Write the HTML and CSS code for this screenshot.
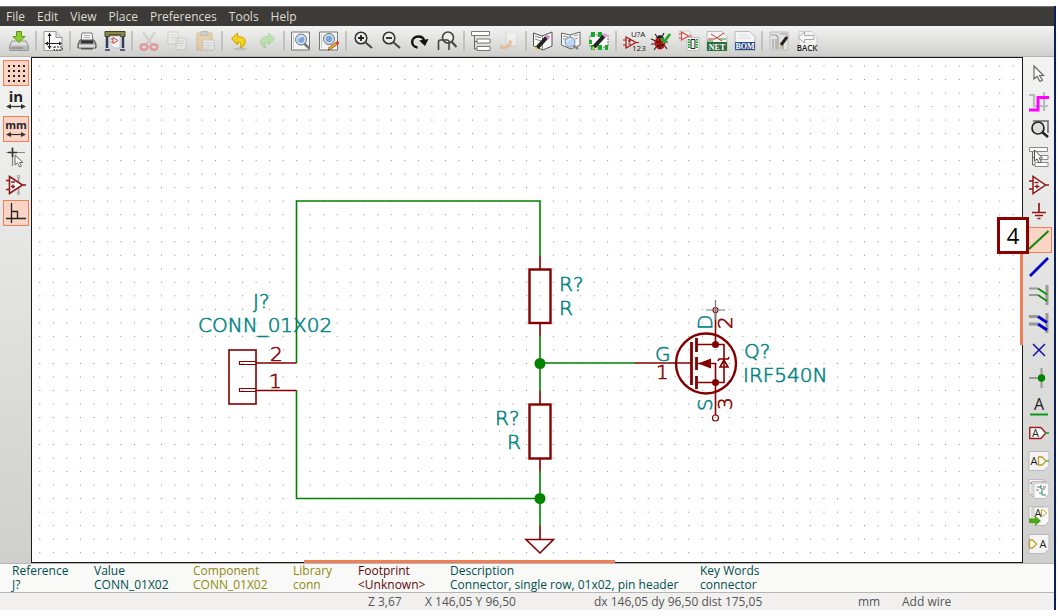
FILE: index.html
```html
<!DOCTYPE html>
<html lang="en">

<head>
    <meta charset="utf-8">
    <title>Eeschema</title>
    <link rel="stylesheet" href="styles.css">
</head>

<body>
    <div class="window">
        <nav class="menubar">
            <button>File</button>
            <button>Edit</button>
            <button>View</button>
            <button>Place</button>
            <button>Preferences</button>
            <button>Tools</button>
            <button>Help</button>
        </nav>

        <div class="toolbar">
            <button title="Save"><svg viewBox="0 0 20 20"><path d="M3 10h14l2.500 5v3.500q0 1-1 1h-17q-1 0-1-1V15z" fill="#b9b9b9" stroke="#888" stroke-width=".8"/><path d="M3.500 10.500h13l2 4H1.500z" fill="#ddd"/><path d="M2 17h12" stroke="#777"/><path d="M7.500 0.500h5v5h3.500l-6 6-6-6h3.500z" fill="#8fca35" stroke="#5a9a12"/></svg></button>
            <span class="sep"></span>
            <button title="Page settings"><svg viewBox="0 0 20 20"><path d="M1 .5h12l6 6v13H1z" fill="#fafafa" stroke="#999"/><path d="M13 .5v6h6" fill="#ddd" stroke="#999"/><path d="M6.500 2v16M2 12.500h16" stroke="#222" fill="none"/><path d="M4.500 5l2-3 2 3zM4.500 15l2 3 2-3zM5 10.500l-3 2 3 2zM16 10.500l3 2-3 2z" fill="#222"/><path d="M11 16h8v3h-8z" fill="#fff" stroke="#222" stroke-dasharray="2 1"/></svg></button>
            <span class="sep"></span>
            <button title="Print"><svg viewBox="0 0 20 20"><path d="M5 2h10l1 8H4z" fill="#fff" stroke="#777"/><path d="M7 4.500h6M6.500 6.500h7" stroke="#aaa"/><path d="M3 9h14l2 4v4H1v-4z" fill="#999" stroke="#555"/><path d="M4 9.500h12v3H4z" fill="#333"/><path d="M2 13.500h16v3H2z" fill="#ddd"/><path d="M4 17h12v1.500H4z" fill="#555"/></svg></button>
            <button title="Plot"><svg viewBox="0 0 20 20"><path d="M2 5v12M18 5v12" stroke="#2c3c60" stroke-width="2.500"/><path d="M0 19h5M15 19h5" stroke="#2c3c60" stroke-width="1.500"/><path d="M0 .5h20v5H0z" fill="#8a8748" stroke="#44431e"/><path d="M4 3.500h12v1H4z" fill="#222"/><path d="M5 5h10v12H9l-4-4z" fill="#f4f4f4" stroke="#aaa" stroke-width=".6"/><path d="M8 6.500v6l5-3z" fill="none" stroke="#c44"/><path d="M6 8h2M6 11h2" stroke="#c44"/></svg></button>
            <span class="sep"></span>
            <button title="Cut" disabled><svg viewBox="0 0 20 20"><path d="M4 1l9 13M16 1L7 14" stroke="#aaa" stroke-width="2.200" fill="none"/><ellipse cx="5" cy="16" rx="3.500" ry="2.800" fill="none" stroke="#e22" stroke-width="2.400"/><ellipse cx="15" cy="16" rx="3.500" ry="2.800" fill="none" stroke="#e22" stroke-width="2.400"/></svg></button>
            <button title="Copy" disabled><svg viewBox="0 0 20 20"><path d="M1 1h10v12H1zM9 7h10v12H9z" fill="#fff" stroke="#999"/><path d="M3 4h6M3 6.500h6M3 9h5M11 10h6M11 12.500h6M11 15h5" stroke="#aaa"/></svg></button>
            <button title="Paste" disabled><svg viewBox="0 0 20 20"><path d="M2 2h15v17H2z" fill="#f0a840" stroke="#b07a20"/><path d="M6 .5h7v4H6z" fill="#999" stroke="#666"/><path d="M8 9h11v10H8z" fill="#fff" stroke="#999"/><path d="M10 12h7M10 14.500h7M10 17h5" stroke="#aaa"/></svg></button>
            <span class="sep"></span>
            <button title="Undo"><svg viewBox="0 0 20 20"><ellipse cx="11" cy="18" rx="7" ry="1.500" fill="#aaa" opacity=".5"/><path d="M2.500 7.500l6-5.500v3.500c6 0 9 3 7.500 7q-1 3.500-5 4.500 3-6-2.500-6v3z" fill="#f3d21c" stroke="#cfa000"/></svg></button>
            <button title="Redo" disabled><svg viewBox="0 0 20 20"><path d="M17.500 7.500l-6-5.500v3.500c-6 0-9 3-7.500 7q1 3.500 5 4.500-3-6 2.500-6v3z" fill="#7be04a" stroke="#4aaa2a"/></svg></button>
            <span class="sep"></span>
            <button title="Find"><svg viewBox="0 0 20 20"><path d="M.5 1h18v18H.5z" fill="#f4f4f4" stroke="#777"/><path d="M2.500 3v14" stroke="#ccc"/><path d="M13 12.500l5.500 5" stroke="#777" stroke-width="2.500"/><circle cx="10" cy="8.500" r="5.500" fill="#b5d0f0" stroke="#777"/><circle cx="10" cy="8.500" r="4" fill="#7ea6dc" stroke="#e4eefa"/><path d="M7.500 8q1-3 4-2.500" stroke="#fff" fill="none"/></svg></button>
            <button title="Find and replace"><svg viewBox="0 0 20 20"><path d="M.5 1h18v18H.5z" fill="#f4f4f4" stroke="#777"/><path d="M2.500 3v14" stroke="#ccc"/><circle cx="10" cy="8" r="5.500" fill="#b5d0f0" stroke="#777"/><circle cx="10" cy="8" r="4" fill="#7ea6dc" stroke="#e4eefa"/><path d="M18 12l-8 6" stroke="#8a4c10" stroke-width="3"/><path d="M18 12l-8 6" stroke="#f4a82a" stroke-width="1.800"/><path d="M17.500 12.500l2-1.500" stroke="#d33" stroke-width="3"/><path d="M8.500 19.500l1-2 1 1.500z" fill="#333"/></svg></button>
            <span class="sep"></span>
            <button title="Zoom in"><svg viewBox="0 0 20 20"><circle cx="8" cy="7" r="5.800" fill="#eee" stroke="#333" stroke-width="1.600"/><path d="M12 11l7 6" stroke="#444" stroke-width="2"/><path d="M5 7h6M8 4v6" stroke="#222" stroke-width="1.800"/></svg></button>
            <button title="Zoom out"><svg viewBox="0 0 20 20"><circle cx="8" cy="7" r="5.800" fill="#eee" stroke="#333" stroke-width="1.600"/><path d="M12 11l7 6" stroke="#444" stroke-width="2"/><path d="M5 7h6" stroke="#222" stroke-width="1.800"/></svg></button>
            <button title="Redraw"><svg viewBox="0 0 20 20"><path d="M8.500 16.500C1 15.500 1.500 5.500 9.500 5.500c3 0 5 1.500 5.500 4" fill="none" stroke="#111" stroke-width="2.400"/><path d="M10 9.500l9.500-1.500-3.500 7z" fill="#111"/></svg></button>
            <button title="Zoom to fit"><svg viewBox="0 0 20 20"><circle cx="11" cy="6.500" r="5.500" fill="#eee" stroke="#444" stroke-width="1.600"/><path d="M14.500 10.500l5 5.500" stroke="#444" stroke-width="2"/><path d="M1.500 19v-8q0-2 2-2h6.500q2 0 2 2v8" fill="none" stroke="#444" stroke-width="1.600"/></svg></button>
            <span class="sep"></span>
            <button title="Hierarchy"><svg viewBox="0 0 20 20"><path d="M3.500 5v13H6M3.500 10.500H6" fill="none" stroke="#666"/><path d="M.5.500h18v4H.5zM6 8h13v4H6zM6 15.500h13v4H6z" fill="#fff" stroke="#777"/></svg></button>
            <button title="Leave sheet" disabled><svg viewBox="0 0 20 20"><path d="M7 1h9l2 2v12H7z" fill="#fff" stroke="#bbb"/><path d="M1 18q-1-4 2-5l1 2q5 1 6-6l3 1q0 8-9 8z" fill="#f09030"/></svg></button>
            <span class="sep"></span>
            <button title="Library editor"><svg viewBox="0 0 20 20"><path d="M.5 2L9 5l10-4v14l-9 4-9.500-4z" fill="#f6f6f6" stroke="#555"/><path d="M9.500 5v13M2 5l6 2M2 8l6 2M12 7l5-2" stroke="#888"/><path d="M14 6L4 17" stroke="#222" stroke-width="4"/><path d="M15.500 5l-2 2" stroke="#d58ad0" stroke-width="4"/><path d="M2 19.500l1-4 2.500 2.500z" fill="#e5cf5a"/></svg></button>
            <button title="Library browser"><svg viewBox="0 0 20 20"><path d="M.5 2L9 4l10-3v13l-9 4-9.500-4z" fill="#f6f6f6" stroke="#666"/><path d="M9.500 4v5M2 5l5 1M2 8h4M13 5l4-1M14 8l3-1" stroke="#999"/><path d="M12 14l5 4" stroke="#888" stroke-width="2.500"/><circle cx="9" cy="11" r="5" fill="#bcd7f4" stroke="#7d96b5"/><path d="M6 11q1-3 4-3" stroke="#fff" fill="none"/></svg></button>
            <button title="Footprint editor"><svg viewBox="0 0 20 20"><path d="M1 4h18v12H1z" fill="#fff" stroke="#777" stroke-dasharray="2 1"/><path d="M2 1h4v5H2zM9 1h4v5H9zM2 14h4v5H2zM9 14h4v5H9zM16 14h3v5h-3z" fill="#17a82c"/><path d="M0 9h3v4H0z" fill="#17a82c"/><path d="M15 5L5 16" stroke="#222" stroke-width="4"/><path d="M17 3.500l-2 2" stroke="#e39adf" stroke-width="4"/><path d="M3 19l1-4 2.500 2.500z" fill="#e5cf5a"/></svg></button>
            <span class="sep"></span>
            <button title="Annotate"><svg viewBox="0 0 20 20"><path d="M3 6v11l10-5.500zM0 9h3M0 14h3M13 11.500h3M5 10h3M5 13h3M6.500 8.500v3" fill="none" stroke="#a11" stroke-width="1.200"/><text x="8" y="6" class="ico-text small">U?A</text><text x="9" y="20" class="ico-text small">123</text></svg></button>
            <button title="Electrical rules check"><svg viewBox="0 0 20 20"><path d="M4 3l3 4M13 2l-2 4M0 8l5 2M0 13h5M3 19l3-4M16 18l-3-4M13 11h4" stroke="#222" stroke-width="1.200"/><ellipse cx="9" cy="12" rx="5.500" ry="6.500" fill="#c51414"/><path d="M5 7q4-6 8 0z" fill="#222"/><path d="M9 7v11" stroke="#222"/><circle cx="6.500" cy="11" r="1" /><circle cx="11.500" cy="14" r="1"/><circle cx="7" cy="15" r="1"/><path d="M10 7l3 4 6-8" fill="none" stroke="#25a52d" stroke-width="2.800"/></svg></button>
            <button title="Assign footprints"><svg viewBox="0 0 20 20"><path d="M0 0h11v10H0z" fill="#f3f3f3" stroke="#ccc"/><path d="M2.500 1v8l7-4zM0 3h2M0 7h2M9 5h4" fill="none" stroke="#d44" stroke-width="1.200"/><path d="M8 6.500h12v13H8z" fill="#fff" stroke="#bbb"/><path d="M12 8.500h4v9h-4z" fill="#eee" stroke="#222"/><path d="M10 8v10M18 8v10" stroke="#17a82c" stroke-width="2" stroke-dasharray="1.500 1"/></svg></button>
            <button title="Generate netlist"><svg viewBox="0 0 20 20"><path d="M0 .5h15l5 5v14H0z" fill="#f4f4f4" stroke="#bbb"/><path d="M1 8h7l9-6M4 3l11 7" fill="none" stroke="#b33"/><path d="M0 10h6M12 8h7" stroke="#393"/><path d="M0 11h20v9H0z" fill="#2e6e3a"/><text x="10" y="19" class="ico-text tag">NET</text></svg></button>
            <button title="Bill of materials"><svg viewBox="0 0 20 20"><path d="M0 .5h15l5 5v14H0z" fill="#f4f4f4" stroke="#bbb"/><path d="M3 4h9M3 7h13" stroke="#ddd"/><path d="M0 11h20v8H0z" fill="#2b4f86"/><text x="10" y="18" class="ico-text tag">BOM</text></svg></button>
            <span class="sep"></span>
            <button title="Run Pcbnew"><svg viewBox="0 0 20 20"><path d="M1 1h18v18H1z" fill="#e4e4e4" stroke="#bbb"/><path d="M2 4h5l2 2v12M4 18V8M7 18V8M12 18v-7M11 3h7M14 18v-5" fill="none" stroke="#999" stroke-width="1.200"/><path d="M18 6l-6 8" stroke="#222" stroke-width="3"/><path d="M19 4.500l-1 1.500" stroke="#d58ad0" stroke-width="3"/><path d="M10 17l1-3.500 2 2z" fill="#e5cf5a"/></svg></button>
            <button title="Back-import"><svg viewBox="0 0 20 20"><path d="M2 .5h13l5 5V19H2z" fill="#f4f4f4" stroke="#ccc"/><path d="M1 6.500L7.500 1v3.500H17v4H7.500V12z" fill="#f8f8f8" stroke="#aaa"/><text x="10" y="20" class="ico-text back">BACK</text></svg></button>
        </div>

        <main class="workspace">
            <div class="side options">
                <button title="Show grid" aria-pressed="true"><svg viewBox="0 0 20 20"><path d="M2 3h17M2 8h17M2 13h17M2 18h17" stroke="#222" stroke-width="2" stroke-dasharray="2 3"/></svg></button>
                <button title="Inches"><svg viewBox="0 0 20 20"><text x="10" y="11" class="ico-text inch">in</text><path d="M3 15.500h14" stroke="#333" stroke-width="1.200"/><path d="M5 13l-5 2.500L5 18zM15 13l5 2.500-5 2.500z" fill="#333"/></svg></button>
                <button title="Millimeters" aria-pressed="true"><svg viewBox="0 0 20 20"><text x="10" y="10" class="ico-text mm">mm</text><path d="M3 15.500h14" stroke="#333" stroke-width="1.200"/><path d="M5 13l-5 2.500L5 18zM15 13l5 2.500-5 2.500z" fill="#333"/></svg></button>
                <button title="Cursor shape"><svg viewBox="0 0 20 20"><path d="M6.500 0v19M0 5.500h19" stroke="#888" stroke-width="1.200"/><path d="M6.500 1v9M2 5.500h9" stroke="#333" stroke-width="1.600"/><path d="M9 8v10l2.500-2 2 4 2-1-2-3.500H17z" fill="#fff" stroke="#666"/></svg></button>
                <button title="Show hidden pins"><svg viewBox="0 0 20 20"><path d="M12.500 2v16" stroke="#999" stroke-width="1.500"/><circle cx="12.500" cy="1.500" r="1.200" fill="none" stroke="#999"/><circle cx="12.500" cy="18.500" r="1.200" fill="none" stroke="#999"/><path d="M3.500 1.500v17l13-8.500z" fill="#fff" stroke="#8f1717" stroke-width="1.600"/><path d="M0 5.500h3M0 14.500h3M17 10h3M5 7h4M5 11.500h4M7 9.500v4" stroke="#8f1717" stroke-width="1.400"/></svg></button>
                <button title="Horizontal and vertical wires only" aria-pressed="true"><svg viewBox="0 0 20 20"><path d="M5.500 0v20M0 15.500h20M5.500 8.500h6v7" fill="none" stroke="#222" stroke-width="1.300"/></svg></button>
            </div>

            <div class="canvas">
                <svg class="sheet">
                    <defs>
                        <pattern id="grid" x="7.300" y="7.500" width="13.520" height="13.520" patternUnits="userSpaceOnUse">
                            <rect width="1" height="1" fill="#888"/>
                        </pattern>
                    </defs>
                    <rect width="100%" height="100%" fill="url(#grid)"/>
                    <g transform="translate(-32 -58)">
                        <!-- wires -->
                        <g class="wire">
                            <path d="M296.500 363V201H540V256"/>
                            <path d="M296.500 390V498.500H540"/>
                            <path d="M540 336V391M540 363H635M540 471V526"/>
                        </g>

                        <!-- J? -->
                        <g class="part">
                            <rect x="229" y="350" width="27" height="54"/>
                            <path d="M256 363H296M256 390.500H296"/>
                            <path class="thin" d="M256 361.500h-16.500v3H256M256 388.500h-16.500v3H256"/>
                        </g>

                        <!-- resistors -->
                        <g class="part">
                            <path d="M540 256V269M540 323V336M540 391V404M540 459V471"/>
                            <rect class="thick" x="529.500" y="269.500" width="21" height="53.500"/>
                            <rect class="thick" x="529.500" y="404.500" width="21" height="54"/>
                            <path d="M540 526V539.500M526 539.500H553.500L540 553z"/>
                        </g>

                        <!-- Q? -->
                        <g class="part">
                            <circle class="thick" cx="706" cy="363.500" r="30"/>
                            <path d="M635 363H691M715.500 313V344M697 344.500H724V382.500H697M697 363.500H715.500V415"/>
                            <path d="M718 361l1-2h9l1-2M724 360l-4 7h8z"/>
                            <path class="bar" d="M691.500 342V385M696.500 338V352M696.500 357V370M696.500 376V389"/>
                            <circle class="thin" cx="715.500" cy="310" r="2.500"/>
                            <circle class="thin" cx="715.500" cy="418" r="3"/>
                            <path class="solid" d="M698 363.500l13-5v10z"/>
                            <circle class="solid" cx="715.500" cy="344.500" r="3.500"/>
                            <circle class="solid" cx="715.500" cy="382.500" r="3.500"/>
                        </g>

                        <circle class="junction" cx="540" cy="363.500" r="5.500"/>
                        <circle class="junction" cx="540" cy="498.500" r="5.500"/>

                        <g class="label">
                            <text x="253" y="308">J?</text>
                            <text x="198" y="332">CONN_01X02</text>
                            <text x="559" y="291">R?</text>
                            <text x="559" y="315">R</text>
                            <text x="495" y="425">R?</text>
                            <text x="507" y="449">R</text>
                            <text x="744" y="358">Q?</text>
                            <text x="743" y="382">IRF540N</text>
                            <text x="655" y="361">G</text>
                            <text transform="translate(712 330) rotate(-90)">D</text>
                            <text transform="translate(712 411) rotate(-90)">S</text>
                        </g>
                        <g class="label pin">
                            <text x="270" y="361">2</text>
                            <text x="269" y="388">1</text>
                            <text x="656" y="379">1</text>
                            <text transform="translate(732 329) rotate(-90)">2</text>
                            <text transform="translate(732 410) rotate(-90)">3</text>
                        </g>

                        <path class="cursor" d="M706 310H725M715.500 300V320"/>
                    </g>
                </svg>
                <div class="scroll scroll-x"></div>
                <div class="scroll scroll-y"></div>
                <div class="callout">4</div>
            </div>

            <div class="side tools">
                <button title="Select"><svg viewBox="0 0 20 20"><path d="M5 2v13l3-2.500 3 5 2.500-1.500-3-4.500h4z" fill="#fff" stroke="#666" stroke-width="1.200"/></svg></button>
                <button title="Highlight net"><svg viewBox="0 0 20 20"><path d="M0 3h5v11h14M15 0v19" fill="none" stroke="#bbb" stroke-width="2.200"/><path d="M0 18h9V5.500h11" fill="none" stroke="#f0f" stroke-width="3"/></svg></button>
                <button title="Enter sheet"><svg viewBox="0 0 20 20"><path d="M4 2h15v12" fill="none" stroke="#666" stroke-width="1.500"/><circle cx="9" cy="9" r="6" fill="#ddd" stroke="#222" stroke-width="1.700"/><path d="M13 13l6 5" stroke="#222" stroke-width="2.500"/></svg></button>
                <button title="Hierarchy"><svg viewBox="0 0 20 20"><path d="M3.500 5v13H6M3.500 10.500H6" fill="none" stroke="#666"/><path d="M.5.500h18v4H.5zM7 8.500h12v4H7zM6 15.500h13v4H6z" fill="#fff" stroke="#888"/><path d="M5.500 3v11l2.500-2 2.500 4 2-1-2.500-4h3.500z" fill="#fff" stroke="#555"/></svg></button>
                <button title="Place component"><svg viewBox="0 0 20 20"><path d="M4 1.500v17l12.500-8.500z" fill="#fff" stroke="#8f1717" stroke-width="1.500"/><path d="M0 6h4M0 14h4M17 10h3M5.500 7.500h4M5.500 11.500h5M8 9.500v4" stroke="#8f1717" stroke-width="1.400"/></svg></button>
                <button title="Place power port"><svg viewBox="0 0 20 20"><path d="M10 1v9M3 10.500h14M6 13.500h8M8.500 16.500h3" stroke="#8f1717" stroke-width="1.700"/></svg></button>
                <button title="Place wire" aria-pressed="true"><svg viewBox="0 0 20 20"><path d="M0 19L19.500 1" stroke="#0c8a0c" stroke-width="2"/></svg></button>
                <button title="Place bus"><svg viewBox="0 0 20 20"><path d="M1 19L19 1" stroke="#0000cc" stroke-width="2.600"/></svg></button>
                <button title="Wire to bus entry"><svg viewBox="0 0 20 20"><path d="M0 3.500h9M0 10h9" stroke="#999" stroke-width="2"/><path d="M18 0v20" stroke="#999" stroke-width="3"/><path d="M9 3.500l9 6M9 10l9 6" stroke="#0c8a0c" stroke-width="1.800"/></svg></button>
                <button title="Bus to bus entry"><svg viewBox="0 0 20 20"><path d="M0 3.500h9M0 11h9M18 0v20" stroke="#999" stroke-width="3"/><path d="M9 3.500l9 6M9 11l9 6" stroke="#0000cc" stroke-width="3"/></svg></button>
                <button title="No connect flag"><svg viewBox="0 0 20 20"><path d="M4 4l12 12M16 4L4 16" stroke="#11a" stroke-width="1.500"/></svg></button>
                <button title="Junction"><svg viewBox="0 0 20 20"><path d="M0 10h12M12.500 0v20" stroke="#999" stroke-width="2"/><circle cx="12.500" cy="10" r="3.700" fill="#008400"/></svg></button>
                <button title="Net name"><svg viewBox="0 0 20 20"><text x="10" y="14" class="ico-text letter">A</text><path d="M1 18.500h18" stroke="#0c9a1c" stroke-width="2"/></svg></button>
                <button title="Global label"><svg viewBox="0 0 20 20"><path d="M.8 4.500h11l5 5.500-5 5.500h-11z" fill="#fff" stroke="#a11818" stroke-width="1.400"/><path d="M16 10h4" stroke="#0c9a1c" stroke-width="1.400"/><text x="6.500" y="14" class="ico-text mid">A</text></svg></button>
                <button title="Hierarchical label"><svg viewBox="0 0 20 20"><path d="M0 .5h20V15l-5 4.500H0z" fill="#f4f4f4" stroke="#bbb"/><text x="5" y="14" class="ico-text mid">A</text><path d="M9.500 6h3.500l4 4-4 4H9.500z" fill="#fff" stroke="#c39b1d" stroke-width="1.300"/><path d="M17 10h3" stroke="#0c9a1c"/></svg></button>
                <button title="Hierarchical sheet"><svg viewBox="0 0 20 20"><path d="M0 .5h14v15H0zM3 2.500h14v15H3z" fill="#f4f4f4" stroke="#bbb"/><path d="M5 4h15v11l-4 4.500H5z" fill="#fafafa" stroke="#bbb"/><path d="M8 8h4M12 6v4h4M10 14h3M13 11v5h4M1 4h2" fill="none" stroke="#3a8a6a"/><path d="M7 11h3M14 8h3" stroke="#c55"/></svg></button>
                <button title="Import sheet pin"><svg viewBox="0 0 20 20"><path d="M0 .5h14v15H0zM3 2h14v15H3z" fill="#f4f4f4" stroke="#bbb"/><path d="M5 1h15v14l-4 4.500H5z" fill="#fafafa" stroke="#bbb"/><text x="9" y="11" class="ico-text mid">A</text><path d="M12.500 4h2l3 3-3 3h-2z" fill="#fff" stroke="#c39b1d"/><path d="M0 12.500h6V9.500l6 5.500-6 5v-3H0z" fill="#4aa81c"/></svg></button>
                <button title="Sheet pin"><svg viewBox="0 0 20 20"><path d="M0 .5h20V15l-5 4.500H0z" fill="#f4f4f4" stroke="#bbb"/><path d="M.5 6h3l4 4-4 4h-3z" fill="#fff" stroke="#c39b1d" stroke-width="1.300"/><text x="14" y="14" class="ico-text mid">A</text></svg></button>
            </div>
        </main>

        <table class="messages">
            <thead>
                <tr>
                    <th class="ref">Reference</th>
                    <th class="val">Value</th>
                    <th class="comp">Component</th>
                    <th class="lib">Library</th>
                    <th class="foot">Footprint</th>
                    <th class="desc">Description</th>
                    <th class="keys">Key Words</th>
                </tr>
            </thead>
            <tbody>
                <tr>
                    <td class="ref">J?</td>
                    <td class="val">CONN_01X02</td>
                    <td class="comp">CONN_01X02</td>
                    <td class="lib">conn</td>
                    <td class="foot">&lt;Unknown&gt;</td>
                    <td class="desc">Connector, single row, 01x02, pin header</td>
                    <td class="keys">connector</td>
                </tr>
            </tbody>
        </table>

        <footer class="status">
            <span>Z 3,67</span>
            <span>X 146,05 Y 96,50</span>
            <span>dx 146,05 dy 96,50 dist 175,05</span>
            <span>mm</span>
            <span>Add wire</span>
        </footer>
    </div>
</body>

</html>
```

FILE: styles.css
```css
* {
    box-sizing: border-box;
    --orange: #f07f55;
    --orange-light: #fad4c5;
    --part: #840000;
    --wire: #008400;
    --label: #008484;
}

body {
    margin: 0;
    background-color: #fff;
    font-family: 'Open Sans', 'Noto Sans', sans-serif;
    font-size: 12px;
}

button {
    padding: 0;
    border: 0;
    background: none;
    font: inherit;
    color: inherit;
}

.window {
    display: flex;
    flex-direction: column;
    height: calc(100vh - 12px);
    margin: 6px 2px 6px 0;
    border-right: 2px solid #0c1f5c;
    background: #f1f0ef;
}

.menubar {
    display: flex;
    gap: 12px;
    height: 20px;
    padding: 0 6px;
    border-top: 1px solid #77756f;
    background: #3c3b37;
    color: #dfdbd2;
}

.toolbar {
    display: flex;
    align-items: center;
    height: 31px;
    padding-left: 5px;
    border-bottom: 1px solid #b5b5b3;
    background: linear-gradient(#f3f3f2, #cfcfcd);
}

.toolbar button {
    display: flex;
    justify-content: center;
    width: 28px;
}

.toolbar button:disabled {
    opacity: 0.35;
}

.toolbar svg,
.side svg {
    display: block;
    width: 20px;
    height: 20px;
    overflow: visible;
}

.sep {
    width: 2px;
    height: 20px;
    margin: 0 2px;
    background: #c2c2c0;
}

.ico-text {
    font-family: 'Open Sans', sans-serif;
    text-anchor: middle;
    fill: #222;
}

.ico-text.small {
    font-size: 8px;
    text-anchor: start;
}

.ico-text.tag {
    font-family: 'Liberation Serif', serif;
    font-size: 8px;
    font-weight: bold;
    fill: #fff;
}

.ico-text.back {
    font-size: 8px;
    font-weight: 600;
}

.ico-text.inch {
    font-size: 15px;
    font-weight: bold;
}

.ico-text.mm {
    font-size: 11px;
    font-weight: bold;
}

.ico-text.letter {
    font-size: 16px;
}

.ico-text.mid {
    font-size: 11px;
}

.workspace {
    display: flex;
    flex: 1;
    min-height: 0;
}

.side {
    display: flex;
    flex-direction: column;
    align-items: center;
    width: 31px;
    background: linear-gradient(#f3f3f2, #cfcfcd);
}

.side button {
    display: grid;
    place-items: center;
    width: 26px;
    height: 26px;
    border: 1px solid transparent;
}

.side button[aria-pressed="true"] {
    border-color: var(--orange);
    background: var(--orange-light);
}

.options {
    gap: 2px;
    padding-top: 3px;
}

.tools {
    justify-content: space-between;
    padding: 4px 0 6px;
}

.canvas {
    position: relative;
    flex: 1;
    border: 1px solid #1a1a1a;
    background: #fff;
}

.sheet {
    display: block;
    width: 100%;
    height: 100%;
}

.wire {
    fill: none;
    stroke: var(--wire);
    stroke-width: 1.6;
}

.junction {
    fill: var(--wire);
}

.part {
    fill: none;
    stroke: var(--part);
    stroke-width: 1.6;
}

.part .thin {
    stroke-width: 1.2;
}

.part .thick {
    stroke-width: 2.4;
}

.part .bar {
    stroke-width: 2.8;
}

.part .solid {
    fill: var(--part);
    stroke: none;
}

.label {
    font-family: 'DejaVu Sans', sans-serif;
    font-size: 20px;
    font-weight: 200;
    fill: var(--label);
    stroke: var(--label);
    stroke-width: 0.6;
}

.pin {
    fill: var(--part);
    stroke: var(--part);
}

.cursor {
    stroke: #777;
    stroke-width: 1.2;
}

.scroll {
    position: absolute;
    background: var(--orange);
}

.scroll-x {
    left: 27.5%;
    bottom: -1px;
    width: 31.4%;
    height: 3px;
}

.scroll-y {
    top: 36%;
    right: -1px;
    width: 3px;
    height: 21%;
}

.callout {
    position: absolute;
    top: 159px;
    right: -7px;
    z-index: 1;
    width: 32px;
    height: 37px;
    border: 3px solid #8b0000;
    background: #fff;
    font-size: 22px;
    line-height: 31px;
    text-align: center;
}

.messages {
    table-layout: fixed;
    width: 100%;
    padding-left: 12px;
    border: 1px solid #b5b5b3;
    border-width: 1px 0;
    border-spacing: 0;
    background: #f9f9f7;
    line-height: 14px;
    color: #00504f;
}

.messages th,
.messages td {
    padding: 0;
    font-weight: normal;
    text-align: left;
    white-space: nowrap;
}

.messages .ref {
    width: 82px;
}

.messages .val {
    width: 99px;
}

.messages .comp {
    width: 100px;
    color: #8f8a10;
}

.messages .lib {
    width: 65px;
    color: #8f8a10;
}

.messages .foot {
    width: 92px;
    color: #5c0808;
}

.messages .desc {
    width: 250px;
}

.status {
    display: grid;
    grid-template-columns: 57px 169px 264px 44px 1fr;
    padding-left: 368px;
    line-height: 17px;
    white-space: nowrap;
    color: #555;
}
```
